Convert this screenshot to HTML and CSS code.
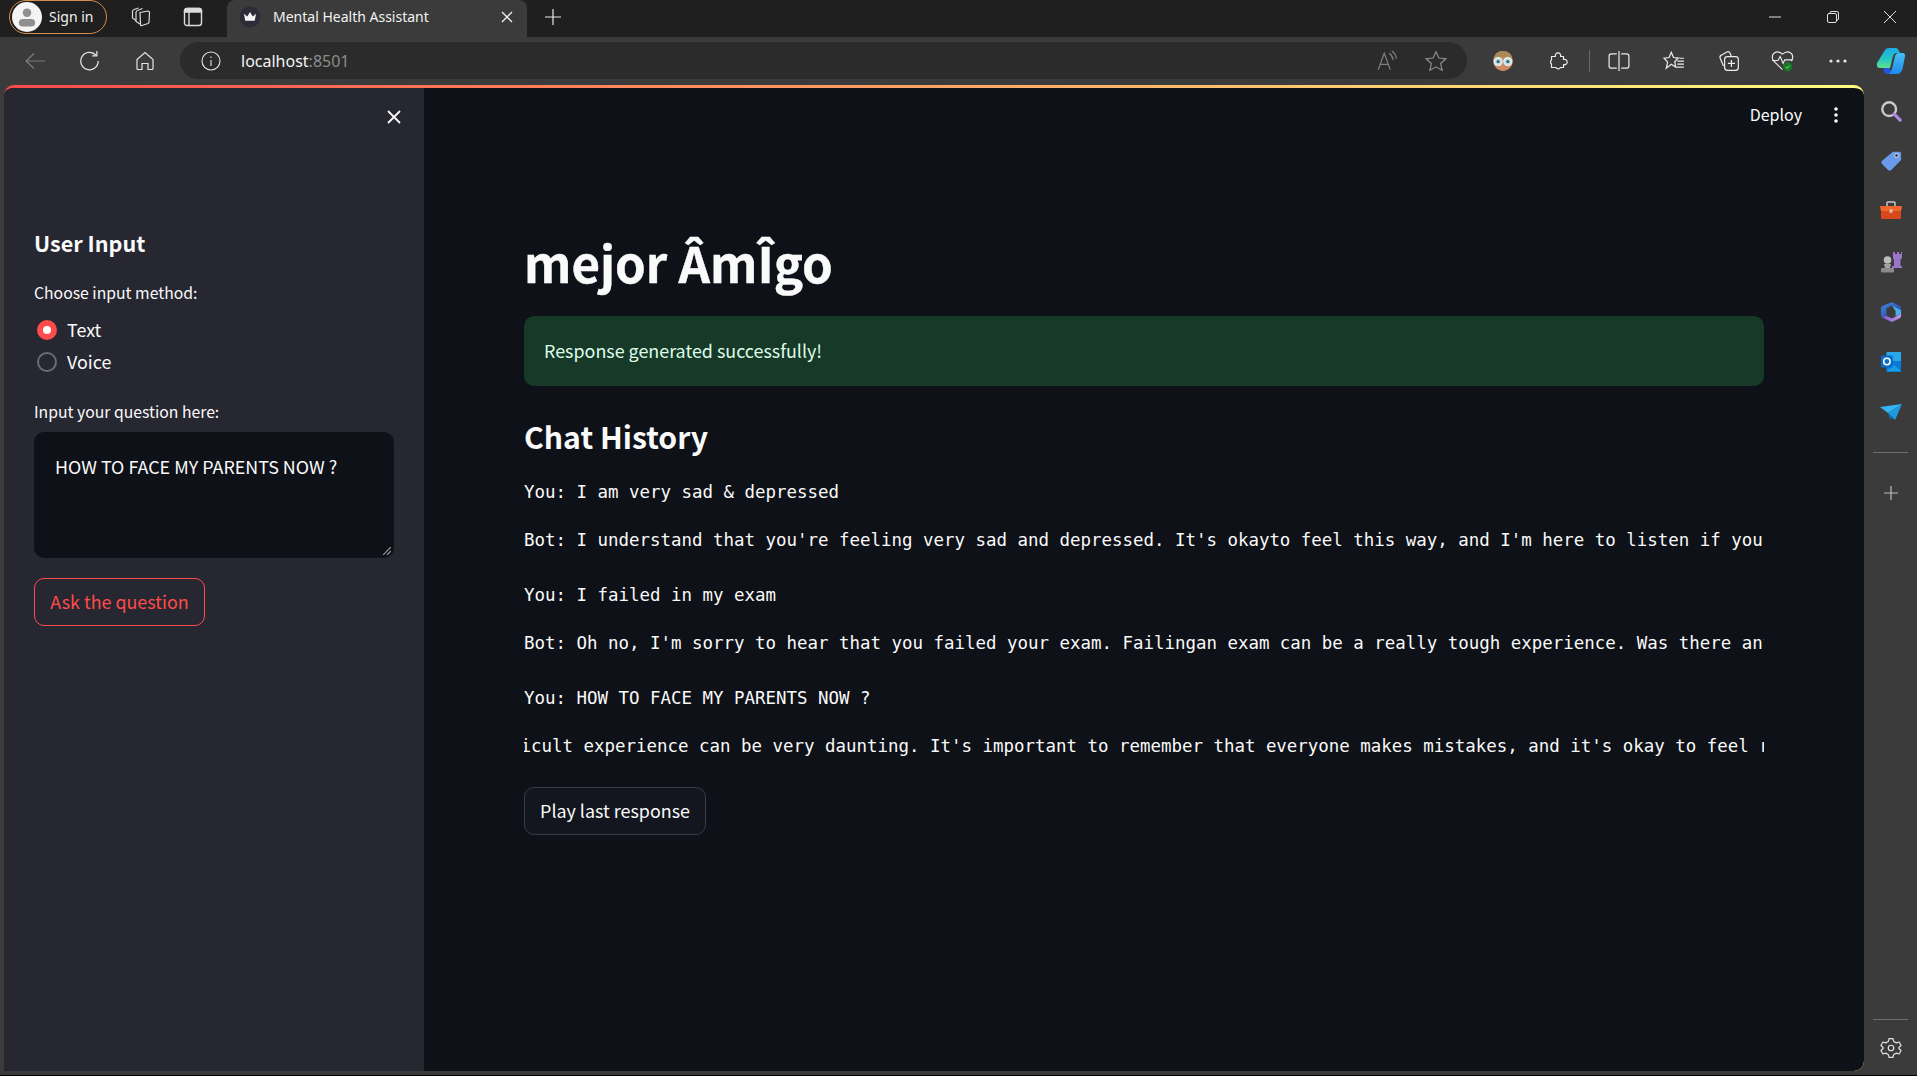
FILE: index.html
```html
<!DOCTYPE html>
<html lang="en">
<head>
    <meta charset="UTF-8">
    <title>Mental Health Assistant</title>
    <link rel="stylesheet" href="styles.css">
</head>
<body>
<div class="browser">
    <!-- title bar -->
    <div class="titlebar">
        <div class="signin">
            <svg class="avatar" viewBox="0 0 24 24" width="30" height="30"><circle cx="12" cy="12" r="12" fill="#f4f4f4"/><circle cx="12" cy="8.500" r="3.400" fill="#8f8f8f"/><rect x="5.500" y="13.500" width="13" height="6" rx="3" fill="#8f8f8f"/></svg>
            <span class="signin-text">Sign in</span>
        </div>
        <svg class="tb-icon workspaces" viewBox="0 0 22 20" width="22" height="20" fill="none" stroke="#dcdcdc" stroke-width="1.200"><path d="M11 5.500 19 4Q20.500 4 20.500 5.500L20 15Q20 16 19 16.500L13 18.500Q11.500 19 11.500 17.500Z"/><path d="M11 17 7 14.500V5.500Q7 4 8.500 3.500L13.500 1.500"/><path d="M7 13.500 3.500 11V4.500Q3.500 3 5 2.500L9.500 1"/></svg>
        <svg class="tb-icon tabgroups" viewBox="0 0 20 20" width="20" height="20" fill="none" stroke="#dcdcdc" stroke-width="1.400"><rect x="1.500" y="1.500" width="17" height="17" rx="2.500"/><path d="M1.500 5H18.500V4Q18.500 1.500 16 1.500H4Q1.500 1.500 1.500 4Z" fill="#dcdcdc"/><path d="M6 5V18.500"/></svg>
        <div class="tab">
            <svg class="favicon" viewBox="0 0 20 20" width="22" height="22"><circle cx="10" cy="10" r="9.500" fill="#2b2c38"/><path d="M4.500 7 7.500 9.500 10 5.500 12.500 9.500 15.500 7 14.300 13.500H5.700Z" fill="#f4f4f4"/></svg>
            <span class="tab-title">Mental Health Assistant</span>
            <svg class="tab-close" viewBox="0 0 12 12" width="12" height="12" stroke="#f0f0f0" stroke-width="1.300"><path d="M1 1 11 11M11 1 1 11"/></svg>
        </div>
        <svg class="tb-icon newtab" viewBox="0 0 18 18" width="18" height="18" stroke="#e8e8e8" stroke-width="1.200"><path d="M9 1V17M1 9H17"/></svg>
        <div class="win-controls">
            <svg viewBox="0 0 12 12" width="12" height="12" stroke="#e0e0e0"><path d="M0 6H12"/></svg>
            <svg viewBox="0 0 12 12" width="12" height="12" fill="none" stroke="#e0e0e0"><rect x=".5" y="2.500" width="9" height="9" rx="1.500"/><path d="M3 2.500V1.500Q3 .5 4 .5H10Q11.500 .5 11.500 2V8Q11.500 9 10 9"/></svg>
            <svg viewBox="0 0 12 12" width="12" height="12" stroke="#e0e0e0"><path d="M0 0 12 12M12 0 0 12"/></svg>
        </div>
    </div>

    <!-- toolbar -->
    <div class="toolbar">
        <div class="nav-btn"><svg viewBox="0 0 20 20" width="20" height="20" fill="none" stroke="#7d7d7d" stroke-width="1.200"><path d="M20 10H1M9 2.500 1 10 9 17.500"/></svg></div>
        <div class="nav-btn"><svg viewBox="0 0 20 20" width="21" height="21" fill="none" stroke="#e4e4e4" stroke-width="1.200"><path d="M16.200 5A8.300 8.300 0 1 0 18.300 10.500"/><path d="M17 1V5.500H12.500"/></svg></div>
        <div class="nav-btn"><svg viewBox="0 0 20 20" width="20" height="20" fill="none" stroke="#e4e4e4" stroke-width="1.200"><path d="M2 8.500 10 1.500 18 8.500V17.500Q18 18.500 17 18.500H13V12.500H7V18.500H3Q2 18.500 2 17.500Z"/></svg></div>
        <div class="addressbar">
            <svg class="info" viewBox="0 0 20 20" width="20" height="20" fill="none" stroke="#e8e8e8" stroke-width="1.100"><circle cx="10" cy="10" r="9"/><path d="M10 9V15M10 5.500V7"/></svg>
            <span class="url">localhost<span class="url-port">:8501</span></span>
            <svg class="read-aloud" viewBox="0 0 20 20" width="22" height="22" fill="none" stroke="#7f7f7f" stroke-width="1.100"><path d="M2 18 7.500 3 13 18M4 13H11"/><path d="M12 3Q15 5 15.500 9M14.500 1Q18 3.500 18.500 8"/></svg>
            <svg class="star" viewBox="0 0 20 20" width="22" height="22" fill="none" stroke="#8a8a8a" stroke-width="1.100"><path d="M10 1.500 12.600 7.300 19 8 14.200 12.200 15.600 18.500 10 15.300 4.400 18.500 5.800 12.200 1 8 7.400 7.300Z"/></svg>
        </div>
        <div class="tools">
            <svg class="t-avatar" viewBox="0 0 20 20" width="22" height="22"><circle cx="10" cy="10" r="9" fill="#c98e68"/><path d="M1.500 9Q2 1 10 1T18.500 9Q13 4 1.500 9Z" fill="#a98a58"/><path d="M6.500 15Q10 20 13.500 15L13 18Q10 20 7 18Z" fill="#d9825e"/><circle cx="5.600" cy="10.500" r="3.600" fill="#bfe0e8" stroke="#f2f2f2"/><circle cx="14.400" cy="10.500" r="3.600" fill="#bfe0e8" stroke="#f2f2f2"/><circle cx="5.600" cy="10.500" r="1.500" fill="#2f6c7a"/><circle cx="14.400" cy="10.500" r="1.500" fill="#2f6c7a"/></svg>
            <svg class="t-ext" viewBox="0 0 20 20" width="20" height="20" fill="none" stroke="#ececec" stroke-width="1.200" stroke-linejoin="round"><path d="M3.500 5.500H7.500A2.700 2.700 0 1 1 12.500 5.500H15.500V8.500A2.700 2.700 0 1 1 15.500 13.500V16.500H12.500A2.600 2.600 0 0 1 8 16.500H3.500V13A2.500 2.500 0 0 1 3.500 9Z"/></svg>
            <span class="t-divider"></span>
            <svg class="t-split" viewBox="0 0 20 20" width="22" height="22" fill="none" stroke="#ececec" stroke-width="1.100"><path d="M8 3.500H3Q1 3.500 1 5.500V14.500Q1 16.500 3 16.500H8M12 3.500H17Q19 3.500 19 5.500V14.500Q19 16.500 17 16.500H12M10 1V19"/></svg>
            <svg class="t-fav" viewBox="0 0 20 20" width="22" height="22" fill="none" stroke="#ececec" stroke-width="1.100"><path d="M7.500 2 9.500 6.800 14 7.300 10.700 10.400 11.500 15.500 7.500 13 3 16.500 4.200 11 1 7.500 5.500 6.800Z"/><path d="M13 10.200H19M13 12.800H19M12 15.500H19M15 7.500H19"/></svg>
            <svg class="t-coll" viewBox="0 0 20 20" width="22" height="22" fill="none" stroke="#ececec" stroke-width="1.100"><path d="M5 14.500 2 7.500Q1.300 5.500 3 4.700L8 1.800Q10 1 11 3L12 5.500"/><rect x="6" y="6" width="12.500" height="12.500" rx="2.500"/><path d="M12.200 9V15.500M9 12.200H15.500"/></svg>
            <svg class="t-health" viewBox="0 0 20 20" width="23" height="23" fill="none"><path d="M10 18 2.500 10.500Q0 7.500 2 4.200 5.500 .5 10 4.500 14.500 .5 18 4.200 20 7.500 17.500 10.500" stroke="#ececec" stroke-width="1"/><path d="M1 10H6L8 6.500 10.500 12.500 12 9.500H19" stroke="#ececec" stroke-width="1"/><circle cx="14.500" cy="15.500" r="4" fill="#157a22"/><path d="M12.800 15.500 14 16.800 16.200 14.300" stroke="#9be3a6" stroke-width=".8"/></svg>
            <svg class="t-more" viewBox="0 0 18 4" width="18" height="4" fill="#e8e8e8"><circle cx="2" cy="2" r="1.600"/><circle cx="9" cy="2" r="1.600"/><circle cx="16" cy="2" r="1.600"/></svg>
            <svg class="t-copilot" viewBox="0 0 30 28" width="30" height="28">
                <defs>
                    <linearGradient id="cop1" x1="0" y1="0" x2="0" y2="1"><stop offset="0" stop-color="#1fa9ea"/><stop offset=".55" stop-color="#25c7c4"/><stop offset="1" stop-color="#5fe08c"/></linearGradient>
                    <linearGradient id="cop2" x1="0" y1="0" x2="0" y2="1"><stop offset="0" stop-color="#45c0f5"/><stop offset="1" stop-color="#1f8cec"/></linearGradient>
                </defs>
                <path d="M9 3Q10 1 13 1H20Q22 1 24 6L21 6Q18 6 17 9L14 21 4 21Q0 21 1 16Z" fill="url(#cop1)"/>
                <path d="M12 27Q15 27 16 24L13 21H7L8 25Q9 27 12 27Z" fill="#2255dd"/>
                <path d="M19 9Q20 6 23 6H27Q29 6 29 9L26.500 22Q25 27 21 27H12Q15 26 16 22Z" fill="url(#cop2)"/>
            </svg>
        </div>
    </div>

    <div class="content">
        <div class="frame">
            <aside class="sidebar">
                <div class="sidebar-head">
                    <svg viewBox="0 0 14 14" width="14" height="14" stroke="#fafafa" stroke-width="1.800"><path d="M1 1 13 13M13 1 1 13"/></svg>
                </div>
                <h3 class="side-title">User Input</h3>
                <p class="field-label method-label">Choose input method:</p>
                <div class="radio-row"><span class="radio radio-on"></span><span class="radio-text">Text</span></div>
                <div class="radio-row"><span class="radio"></span><span class="radio-text">Voice</span></div>
                <p class="field-label question-label">Input your question here:</p>
                <div class="question-box">
                    HOW TO FACE MY PARENTS NOW ?
                    <svg class="grip" viewBox="0 0 8 8" width="8" height="8" stroke="#9a9a9a" stroke-width="1.200"><path d="M0 8 8 0M4 8 8 4"/></svg>
                </div>
                <button class="btn btn-ask">Ask the question</button>
            </aside>
            <main class="main">
                <div class="main-head">
                    <span class="deploy">Deploy</span>
                    <svg class="kebab" viewBox="0 0 4 16" width="4" height="16" fill="#fafafa"><circle cx="2" cy="2" r="1.800"/><circle cx="2" cy="8" r="1.800"/><circle cx="2" cy="14" r="1.800"/></svg>
                </div>
                <div class="main-body">
                    <h1>mejor ÂmÎgo</h1>
                    <div class="success">Response generated successfully!</div>
                    <h2>Chat History</h2>
                    <div class="chat">
                        <div class="line line-you">You: I am very sad &amp; depressed</div>
                        <div class="line line-bot">Bot: I understand that you're feeling very sad and depressed. It's okayto feel this way, and I'm here to listen if you want to talk</div>
                        <div class="line line-you">You: I failed in my exam</div>
                        <div class="line line-bot">Bot: Oh no, I'm sorry to hear that you failed your exam. Failingan exam can be a really tough experience. Was there anything</div>
                        <div class="line line-you">You: HOW TO FACE MY PARENTS NOW ?</div>
                        <div class="line line-bot line-scrolled">icult experience can be very daunting. It's important to remember that everyone makes mistakes, and it's okay to feel really</div>
                    </div>
                    <button class="btn btn-play">Play last response</button>
                </div>
            </main>
        </div>

        <!-- edge sidebar -->
        <div class="rail">
            <div class="rail-top">
                <svg viewBox="0 0 24 24" width="22" height="22" fill="none"><circle cx="10" cy="10" r="7.500" stroke="#c9c9c9" stroke-width="2.600"/><path d="M15.500 15.500 22 22" stroke="#b286e0" stroke-width="3.500" stroke-linecap="round"/></svg>
                <svg viewBox="0 0 24 24" width="22" height="22"><path d="M14 2H21Q23 2 23 4V11L12 22Q10.500 23 9 22L2 15Q1 13.500 2 12Z" fill="#6a9ae8"/><circle cx="18" cy="6" r="2" fill="#27324a" stroke="#e8eefb"/></svg>
                <svg viewBox="0 0 24 24" width="24" height="24"><path d="M8 7V4Q8 3 9 3H15Q16 3 16 4V7" fill="none" stroke="#c8c8c8" stroke-width="1.500"/><path d="M1 8Q1 7 2 7H22Q23 7 23 8L22 12H2Z" fill="#f2662b"/><path d="M2 12H22V19Q22 20 21 20H3Q2 20 2 19Z" fill="#d9471a"/><rect x="10.500" y="10" width="3" height="4" rx="1" fill="#d8b8a6"/></svg>
                <svg viewBox="0 0 24 24" width="24" height="24"><circle cx="8.500" cy="10" r="3.800" fill="#bdbdbd"/><path d="M5 14H12L11 18H6Z" fill="#a3a3a3"/><rect x="2" y="18" width="13" height="4.500" rx="1" fill="#8a8a8a"/><path d="M14 2H16V4H18V2H20V4H22V2H23V8L21.500 10V16H23V18H13V16H15V10L14 8Z" fill="#9a75c9"/></svg>
                <svg viewBox="0 0 24 24" width="22" height="22"><defs><linearGradient id="o1" x1="0" y1="0" x2="1" y2="1"><stop offset="0" stop-color="#3b87d9"/><stop offset="1" stop-color="#2e3fa8"/></linearGradient><linearGradient id="o2" x1="0" y1="0" x2="1" y2="0"><stop offset="0" stop-color="#7a5bd0"/><stop offset="1" stop-color="#c59ae8"/></linearGradient></defs><path d="M13 1 21.500 5.500Q23 6.500 23 8V10L13 5 7 8V16L2.500 18Q1 16.500 1 15V8Q1 6.500 2.500 5.500Z" fill="url(#o1)"/><path d="M7 16 13 19 23 14V16Q23 18 21.500 18.800L13 23 2.500 18Z" fill="url(#o2)"/><path d="M13 5 23 10V14L17 16.500V11Z" fill="#49b1e8"/></svg>
                <svg viewBox="0 0 24 24" width="22" height="22"><rect x="7" y="1" width="16" height="13" rx="1" fill="#28a8ea"/><path d="M7 11H23V22Q23 23 22 23H8Q7 23 7 22Z" fill="#0f78d4"/><path d="M7 22 15 15 23 22" fill="#14a0e8"/><rect x="1" y="5" width="13" height="13" rx="1.500" fill="#0a6cc9"/><circle cx="7.500" cy="11.500" r="3.500" fill="none" stroke="#fff" stroke-width="1.600"/></svg>
                <svg viewBox="0 0 24 24" width="24" height="24"><path d="M1 7 23 4 9 13Z" fill="#35b6f2"/><path d="M23 4 9 13 16 20Z" fill="#1e9be0"/><path d="M9 13 11 20 13 17Z" fill="#0f6fb8"/></svg>
            </div>
            <span class="rail-hr rail-hr-top"></span>
            <svg class="rail-plus" viewBox="0 0 16 16" width="16" height="16" stroke="#bdbdbd" stroke-width="1.200"><path d="M8 1V15M1 8H15"/></svg>
            <div class="rail-bottom">
                <span class="rail-hr"></span>
                <svg class="gear" viewBox="0 0 24 24" width="22" height="22" fill="none" stroke="#e2e2e2" stroke-width="1.300"><circle cx="12" cy="12" r="3"/><path d="M9.800 1.800H14.200L15 5 17.800 6.400 20.800 5.500 23 9.300 20.600 11.500V12.500L23 14.700 20.800 18.500 17.800 17.600 15 19 14.200 22.200H9.800L9 19 6.200 17.600 3.200 18.500 1 14.700 3.400 12.500V11.500L1 9.300 3.200 5.500 6.200 6.400 9 5Z" stroke-linejoin="round"/></svg>
            </div>
        </div>
    </div>
</div>
</body>
</html>
```

FILE: styles.css
```css
* {
    box-sizing: border-box;
}

html, body {
    margin: 0;
    height: 100%;
    background-color: #000;
    overflow: hidden;
}

body {
    font-family: "Noto Sans CJK SC", "Noto Sans", sans-serif;
    color: #fafafa;
}

.browser {
    height: 1075px;
    display: flex;
    flex-direction: column;
    background-color: #3b3b3b;
}

/* title bar */
.titlebar {
    height: 37px;
    flex: none;
    display: flex;
    align-items: center;
    background-color: #1f1f1f;
    font-family: "Noto Sans", sans-serif;
    font-size: 14px;
    color: #f2f2f2;
}

.signin {
    width: 98px;
    height: 34px;
    margin-left: 9px;
    margin-top: -3px;
    padding-left: 2px;
    display: flex;
    align-items: center;
    gap: 7px;
    border: 1px solid #d38c4c;
    border-radius: 17px;
}

.signin-text {
    padding-bottom: 2px;
}

.tb-icon {
    flex: none;
    margin-top: -3px;
}

.workspaces {
    margin-left: 22px;
}

.tabgroups {
    margin-left: 32px;
}

.tab {
    width: 300px;
    height: 37px;
    margin-left: 24px;
    padding: 0 0 3px 12px;
    display: flex;
    align-items: center;
    background-color: #3b3b3b;
    border-radius: 8px 8px 0 0;
}

.tab-title {
    margin-left: 12px;
    padding-bottom: 2px;
    flex: 1;
}

.tab-close {
    margin-right: 14px;
}

.newtab {
    margin-left: 17px;
}

.win-controls {
    width: 127px;
    margin-left: auto;
    margin-right: 21px;
    margin-top: -4px;
    display: flex;
    justify-content: space-between;
}

/* toolbar */
.toolbar {
    height: 48px;
    flex: none;
    display: flex;
    align-items: center;
    padding: 0 0 1px 7px;
}

.nav-btn {
    width: 55px;
    display: flex;
    justify-content: center;
}

.addressbar {
    width: 1287px;
    height: 37px;
    margin-left: 8px;
    padding: 0 20px 0 21px;
    display: flex;
    align-items: center;
    background-color: #2b2b2b;
    border-radius: 19px;
    font-family: "Noto Sans", sans-serif;
    font-size: 16px;
}

.url {
    margin-left: 20px;
    flex: 1;
    color: #f4f4f4;
}

.url-port {
    color: #8c8c8c;
}

.star {
    margin-left: 27px;
}

.tools {
    margin-left: 25px;
    display: flex;
    align-items: center;
}

.t-ext { margin-left: 34px; }
.t-divider { width: 1px; height: 22px; margin-left: 21px; background-color: #6a6a6a; }
.t-split { margin-left: 18px; }
.t-fav { margin-left: 33px; }
.t-coll { margin-left: 33px; }
.t-health { margin-left: 31px; }
.t-more { margin-left: 35px; }
.t-copilot { margin-left: 29px; }

/* app area */
.content {
    flex: 1;
    display: flex;
    min-height: 0;
}

.frame {
    width: 1860px;
    margin-left: 4px;
    margin-bottom: 4px;
    display: flex;
    border-top: 3px solid transparent;
    border-radius: 10px 10px 10px 0;
    background:
        linear-gradient(#0e1117, #0e1117) padding-box,
        linear-gradient(90deg, #ff4b4b, #fffd80) border-box;
    overflow: hidden;
}

.sidebar {
    width: 420px;
    padding: 0 30px;
    background-color: #262730;
    font-size: 17.900px;
}

.sidebar-head {
    height: 139px;
    padding: 22px 0 0;
    display: flex;
    justify-content: flex-end;
}

.sidebar-head svg {
    margin-right: -7px;
}

.side-title {
    margin: 0;
    font-size: 21.600px;
    line-height: 32px;
    font-weight: 600;
}

.field-label {
    margin: 0;
    font-size: 15.750px;
    line-height: 24px;
}

.method-label {
    margin-top: 22px;
    margin-bottom: 9px;
}

.question-label {
    margin-top: 22px;
    margin-bottom: 8px;
}

.radio-row {
    height: 32px;
    display: flex;
    align-items: center;
    gap: 10px;
    padding-left: 3px;
}

.radio-text {
    padding-bottom: 2px;
}

.radio {
    width: 20px;
    height: 20px;
    border: 2px solid #6b6c75;
    border-radius: 50%;
    background-color: #262730;
}

.radio-on {
    border: 6.500px solid #ff4b4b;
    background-color: #fff;
}

.question-box {
    height: 126px;
    padding: 22px 21px 0;
    background-color: #0e1117;
    border-radius: 10px;
    line-height: 24px;
    position: relative;
}

.grip {
    position: absolute;
    right: 3px;
    bottom: 3px;
}

.btn {
    display: block;
    height: 48px;
    padding: 0 0 2px;
    font-family: inherit;
    font-size: 17.900px;
    white-space: nowrap;
    border-radius: 10px;
    background-color: transparent;
}

.btn-ask {
    width: 171px;
    margin-top: 20px;
    color: #ff4b4b;
    border: 1px solid #ff4b4b;
}

.btn-play {
    width: 182px;
    margin-top: 30px;
    color: #fafafa;
    background-color: #13161e;
    border: 1px solid #3a3c46;
}

.main {
    flex: 1;
    min-width: 0;
}

.main-head {
    height: 54px;
    padding-right: 26px;
    display: flex;
    align-items: center;
    justify-content: flex-end;
    font-size: 16px;
}

.deploy {
    padding-bottom: 2px;
}

.kebab {
    margin-left: 32px;
}

.main-body {
    padding: 88px 100px 0;
}

h1 {
    margin: 0 0 23px;
    font-size: 49.200px;
    line-height: 63px;
    font-weight: 700;
    -webkit-text-stroke: .4px #fafafa;
}

h2 {
    margin: 30px 0 23px;
    font-size: 30.200px;
    line-height: 40px;
    font-weight: 600;
}

.success {
    height: 70px;
    padding: 0 20px 2px;
    display: flex;
    align-items: center;
    background-color: #173928;
    color: #dffde9;
    border-radius: 10px;
    font-size: 17.900px;
}

.line {
    height: 24px;
    padding-top: 1px;
    line-height: 24px;
    font-family: "DejaVu Sans Mono", "Liberation Mono", monospace;
    font-size: 17.450px;
    white-space: pre;
    overflow: hidden;
}

.line-bot {
    margin-top: 24px;
}

.line-bot + .line-you {
    margin-top: 31px;
}

/* horizontally scrolled code line */
.line-scrolled {
    text-indent: -3.500px;
}

/* edge sidebar */
.rail {
    width: 53px;
    padding-top: 1px;
    display: flex;
    flex-direction: column;
    align-items: center;
}

.rail-top {
    display: grid;
    grid-auto-rows: 50.200px;
    align-items: center;
    justify-items: center;
}

.rail-hr {
    width: 35px;
    height: 1px;
    background-color: #6f6f6f;
    flex: none;
}

.rail-hr-top {
    margin-top: 15px;
}

.rail-plus {
    margin-top: 32px;
}

.rail-bottom {
    margin-top: auto;
    margin-bottom: 16px;
    display: flex;
    flex-direction: column;
    align-items: center;
}

.gear {
    margin-top: 17px;
}
```
